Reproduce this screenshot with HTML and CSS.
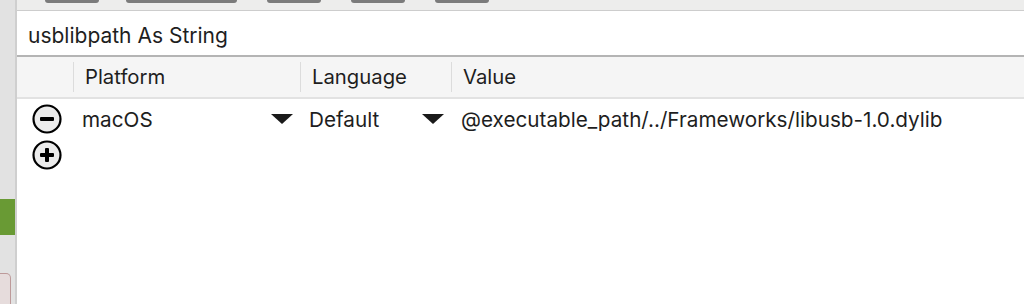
FILE: index.html
```html
<html>
<head>
<title>Constant editor</title>
<link rel="stylesheet" href="styles.css">
</head>
<body>
	<div class="page">
		<div class="sidebar">
			<div class="side-green"></div>
			<div class="side-tag"></div>
		</div>
		<div class="main">
			<div class="toolbar">
				<div class="tool-btn w1"></div>
				<div class="tool-btn w2"></div>
				<div class="tool-btn w3"></div>
				<div class="tool-btn w3"></div>
				<div class="tool-btn w3"></div>
			</div>
			<div class="declaration">usblibpath As String</div>
			<div class="grid header">
				<div class="hcell"></div>
				<div class="hcell sep">Platform</div>
				<div class="hcell sep">Language</div>
				<div class="hcell sep">Value</div>
			</div>
			<div class="grid row">
				<div class="icon-cell">
					<svg class="round-btn" width="32" height="32" viewBox="0 0 32 32">
						<circle cx="16" cy="16" r="13.5" fill="#ececec" stroke="#000" stroke-width="2.2"/>
						<rect x="9" y="14" width="14" height="4" rx="1" fill="#000"/>
					</svg>
				</div>
				<div class="cell popup">macOS<span class="arrow"></span></div>
				<div class="cell popup">Default<span class="arrow"></span></div>
				<div class="cell value">@executable_path/../Frameworks/libusb-1.0.dylib</div>
			</div>
			<div class="grid addrow">
				<div class="icon-cell">
					<svg class="round-btn" width="32" height="32" viewBox="0 0 32 32">
						<circle cx="16" cy="16" r="13.5" fill="#ececec" stroke="#000" stroke-width="2.2"/>
						<rect x="9" y="14" width="14" height="4" rx="1" fill="#000"/>
						<rect x="14" y="9" width="4" height="14" rx="1" fill="#000"/>
					</svg>
				</div>
			</div>
		</div>
	</div>
</body>
</html>
```
FILE: styles.css
```css
body {
	margin: 0;
	background-color: #ffffff;
	font-family: Inter, "Liberation Sans", sans-serif;
	color: #1e1e1e;
}
.page {
	display: flex;
	width: 1024px;
	height: 304px;
	overflow: hidden;
}
.sidebar {
	width: 15px;
	flex: none;
	background-color: #e2e2e2;
	border-right: 2px solid #cfcfcf;
	padding-top: 199px;
}
.side-green {
	height: 36px;
	background-color: #699a34;
}
.side-tag {
	margin-top: 38px;
	width: 10px;
	height: 40px;
	background-color: #e6dcdc;
	border: 1.5px solid #bd9a9a;
	border-radius: 0 5px 5px 0;
	border-left: none;
}
.main {
	flex: 1;
	display: flex;
	flex-direction: column;
}
.toolbar {
	height: 10px;
	background-color: #ededec;
	border-bottom: 1px solid #cdcdcd;
	display: flex;
	align-items: flex-start;
	padding-left: 28px;
	gap: 26px;
}
.tool-btn {
	height: 3px;
	background-color: #7b7b7b;
	border-radius: 0 0 5px 5px;
}
.w1 { width: 54px; }
.w2 { width: 111px; margin-left: 1px; }
.w3 { width: 54px; margin-left: 4px; }
.declaration {
	height: 44px;
	line-height: 50px;
	padding-left: 11px;
	font-size: 21px;
	border-bottom: 2px solid #b4b4b4;
}
.grid {
	display: grid;
	grid-template-columns: 56px 227px 151px 1fr;
}
.header {
	height: 40px;
	background-color: #f5f5f5;
	border-bottom: 2px solid #e2e2e2;
	align-items: center;
}
.hcell {
	font-size: 20.3px;
	padding-left: 11px;
	line-height: 30px;
}
.sep {
	border-left: 1px solid #dcdcdc;
}
.row {
	height: 40px;
	align-items: center;
}
.addrow {
	height: 36px;
	align-items: start;
}
.icon-cell {
	padding-left: 14px;
	display: flex;
	align-items: center;
}
.round-btn {
	display: block;
}
.cell {
	font-size: 20.7px;
	padding-left: 9px;
}
.popup {
	display: flex;
	align-items: center;
	justify-content: space-between;
	padding-right: 7px;
}
.arrow {
	width: 0;
	height: 0;
	border-left: 11px solid transparent;
	border-right: 11px solid transparent;
	border-top: 10px solid #1a1a1a;
}
.value {
	padding-left: 10px;
}
```
